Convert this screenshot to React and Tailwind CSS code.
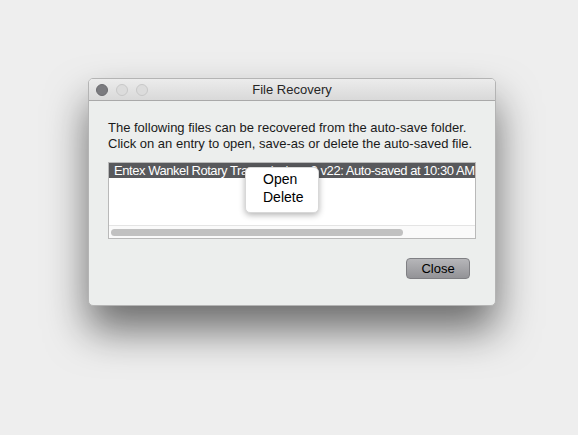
import React from 'react';

const font = { fontFamily: '"Liberation Sans", Arial, sans-serif' };

const TrafficLights = () => (
  <div className="flex items-center gap-[8px] pl-[7px]">
    <span className="w-[12px] h-[12px] rounded-full bg-[#7b7b7f] border border-[#6c6c70]"></span>
    <span className="w-[12px] h-[12px] rounded-full bg-[#dcdcdc] border border-[#c8c8c8]"></span>
    <span className="w-[12px] h-[12px] rounded-full bg-[#dcdcdc] border border-[#c8c8c8]"></span>
  </div>
);

export default function App() {
  return (
    <div className="w-[578px] h-[435px] bg-[#eeeeee] overflow-hidden pt-[78px] pl-[88px]" style={font}>
      <div className="w-[408px] h-[228px] rounded-[5px] bg-[#eceeed] border border-[#b4b4b4] shadow-[0_24px_42px_rgba(0,0,0,0.55)] flex flex-col overflow-hidden">
        {/* Title bar */}
        <div className="relative h-[22px] shrink-0 flex items-center bg-gradient-to-b from-[#ececec] to-[#d9d9d9] border-b border-[#a9a9a9]">
          <TrafficLights />
          <div className="absolute inset-0 flex items-center justify-center text-[13px] text-[#262626]">File Recovery</div>
        </div>

        {/* Body */}
        <div className="flex-1 flex flex-col px-[19px] pt-[19px]">
          <p className="text-[13px] leading-[16px] text-[#1a1a1a]">
            The following files can be recovered from the auto-save folder.
            <br />
            Click on an entry to open, save-as or delete the auto-saved file.
          </p>

          <div className="relative mt-[10px] w-[368px] h-[77px] bg-white border border-[#b9b9b9] flex flex-col overflow-hidden">
            <div className="h-[15px] shrink-0 bg-[#58595c] text-white text-[13px] leading-[15px] tracking-[-0.45px] pl-[5px] whitespace-nowrap overflow-hidden">
              Entex Wankel Rotary Transmission v3 v22: Auto-saved at 10:30 AM
            </div>
            <div className="flex-1"></div>
            <div className="h-[13px] shrink-0 bg-[#fafafa] border-t border-[#e4e4e4] flex items-center px-[2px]">
              <div className="w-[292px] h-[7px] rounded-full bg-[#c1c1c1]"></div>
            </div>

            {/* Context menu */}
            <div className="absolute left-[136px] top-[4px] w-[74px] h-[46px] bg-white rounded-[5px] shadow-[0_2px_6px_rgba(0,0,0,0.3)] border border-[#d8d8d8] flex flex-col pl-[17px] pt-[2px] text-[14px] leading-[18px] text-black">
              <span>Open</span>
              <span>Delete</span>
            </div>
          </div>

          <div className="flex justify-end mt-[19px] pr-[6px]">
            <button className="w-[64px] h-[21px] rounded-[4px] bg-gradient-to-b from-[#b6b6b9] to-[#939397] border border-[#7f7f83] text-[13px] text-black leading-[19px]">
              Close
            </button>
          </div>
        </div>
      </div>
    </div>
  );
}
